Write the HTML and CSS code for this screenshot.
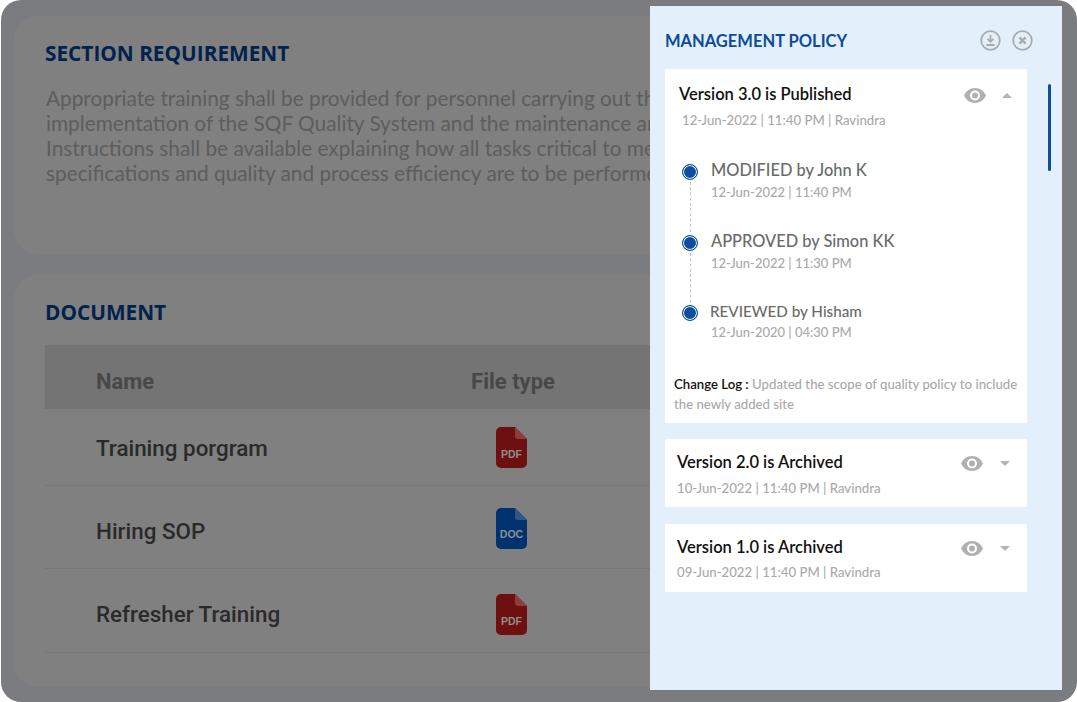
FILE: index.html
```html
<!DOCTYPE html>
<html lang="en">
<head>
<meta charset="utf-8">
<title>Management Policy</title>
<link rel="stylesheet" href="styles.css">
</head>
<body>
<div class="frame">
  <main class="content">
    <section class="card card-req">
      <h2 class="card-title">SECTION REQUIREMENT</h2>
      <p class="req-line">Appropriate training shall be provided for personnel carrying out the</p>
      <p class="req-line">implementation of the SQF Quality System and the maintenance and</p>
      <p class="req-line">Instructions shall be available explaining how all tasks critical to meet</p>
      <p class="req-line">specifications and quality and process efficiency are to be performed</p>
    </section>
    <section class="card card-doc">
      <h2 class="card-title">DOCUMENT</h2>
      <div class="table">
        <div class="row row-head"><div class="col-name">Name</div><div class="col-type">File type</div></div>
        <div class="row row-body row-1"><div class="col-name">Training porgram</div><div class="col-type">
          <svg class="file" viewBox="0 0 31 41"><path fill="#6e1010" d="M5 0H19L31 12V36a5 5 0 0 1-5 5H5a5 5 0 0 1-5-5V5a5 5 0 0 1 5-5Z"/><path fill="#8f3c3f" d="M19 0L31 12H22a3 3 0 0 1-3-3Z"/><text class="file-label" x="15.5" y="31">PDF</text></svg></div></div>
        <div class="row row-body row-2"><div class="col-name">Hiring SOP</div><div class="col-type">
          <svg class="file" viewBox="0 0 31 41"><path fill="#00326f" d="M5 0H19L31 12V36a5 5 0 0 1-5 5H5a5 5 0 0 1-5-5V5a5 5 0 0 1 5-5Z"/><path fill="#33558a" d="M19 0L31 12H22a3 3 0 0 1-3-3Z"/><text class="file-label" x="15.5" y="30">DOC</text></svg></div></div>
        <div class="row row-body row-3"><div class="col-name">Refresher Training</div><div class="col-type">
          <svg class="file" viewBox="0 0 31 41"><path fill="#6e1010" d="M5 0H19L31 12V36a5 5 0 0 1-5 5H5a5 5 0 0 1-5-5V5a5 5 0 0 1 5-5Z"/><path fill="#8f3c3f" d="M19 0L31 12H22a3 3 0 0 1-3-3Z"/><text class="file-label" x="15.5" y="31">PDF</text></svg></div></div>
      </div>
    </section>
  </main>

  <aside class="panel">
    <header class="panel-head">
      <h1 class="panel-title">MANAGEMENT POLICY</h1>
      <div class="panel-actions">
        <svg class="round-icon" viewBox="0 0 21 21"><circle cx="10.5" cy="10.5" r="9.3"/><path d="M10.5 5v6.4M7.5 8.8l3 3 3-3M6.3 15h8.4"/></svg>
        <svg class="round-icon" viewBox="0 0 21 21"><circle cx="10.5" cy="10.5" r="9.3"/><path class="thick" d="M7.4 7.4l6.2 6.2M13.6 7.4l-6.2 6.2"/></svg>
      </div>
    </header>
    <div class="scrollbar"></div>

    <article class="version version-open">
      <div class="version-top">
        <h3 class="version-name">Version 3.0 is Published</h3>
        <svg class="eye" viewBox="0 0 22 15"><path fill-rule="evenodd" d="M11 0C6 0 2 3 0 7.5 2 12 6 15 11 15s9-3 11-7.5C20 3 16 0 11 0Zm0 12.5a5 5 0 1 1 0-10 5 5 0 0 1 0 10Zm0-8a3 3 0 1 0 0 6 3 3 0 0 0 0-6Z"/></svg>
        <span class="caret caret-up"></span>
      </div>
      <div class="version-meta meta-open">12-Jun-2022 | 11:40 PM | Ravindra</div>
      <ol class="timeline">
        <li class="step step-1"><span class="dot"></span><div class="step-name">MODIFIED by John K</div><div class="step-date">12-Jun-2022 | 11:40 PM</div></li>
        <li class="step step-2"><span class="dot"></span><div class="step-name">APPROVED by Simon KK</div><div class="step-date">12-Jun-2022 | 11:30 PM</div></li>
        <li class="step step-3"><span class="dot"></span><div class="step-name step-name-small">REVIEWED by Hisham</div><div class="step-date">12-Jun-2020 | 04:30 PM</div></li>
      </ol>
      <p class="changelog"><b>Change Log :</b> Updated the scope of quality policy to include the newly added site</p>
    </article>

    <article class="version version-closed">
      <div class="version-top">
        <h3 class="version-name">Version 2.0 is Archived</h3>
        <svg class="eye" viewBox="0 0 22 15"><path fill-rule="evenodd" d="M11 0C6 0 2 3 0 7.5 2 12 6 15 11 15s9-3 11-7.5C20 3 16 0 11 0Zm0 12.5a5 5 0 1 1 0-10 5 5 0 0 1 0 10Zm0-8a3 3 0 1 0 0 6 3 3 0 0 0 0-6Z"/></svg>
        <span class="caret caret-down"></span>
      </div>
      <div class="version-meta">10-Jun-2022 | 11:40 PM | Ravindra</div>
    </article>

    <article class="version version-closed">
      <div class="version-top">
        <h3 class="version-name">Version 1.0 is Archived</h3>
        <svg class="eye" viewBox="0 0 22 15"><path fill-rule="evenodd" d="M11 0C6 0 2 3 0 7.5 2 12 6 15 11 15s9-3 11-7.5C20 3 16 0 11 0Zm0 12.5a5 5 0 1 1 0-10 5 5 0 0 1 0 10Zm0-8a3 3 0 1 0 0 6 3 3 0 0 0 0-6Z"/></svg>
        <span class="caret caret-down"></span>
      </div>
      <div class="version-meta">09-Jun-2022 | 11:40 PM | Ravindra</div>
    </article>
  </aside>
</div>
</body>
</html>
```
FILE: styles.css
```css
* { box-sizing: border-box; }
html, body { margin: 0; padding: 0; background: #fff; }
body { width: 1077px; height: 702px; overflow: hidden; font-family: Lato, sans-serif; }
h1, h2, h3, p, ol { margin: 0; padding: 0; }

.frame {
  position: relative;
  width: 1076px;
  height: 702px;
  margin-left: 1px;
  border-radius: 20px;
  overflow: hidden;
  background: #7a7c7f;
}
.content {
  display: flex;
  flex-direction: column;
  gap: 21px;
  padding: 16px 0 0 13px;
}
.card {
  width: 1040px;
  background: #808080;
  border-radius: 24px;
  padding-left: 31px;
  overflow: hidden;
}
.card-req { height: 238px; padding-top: 23px; }
.card-doc { height: 412px; padding-top: 23px; }
.card-title {
  font: 700 20.8px/28px "Open Sans", sans-serif;
  color: #02224e;
  white-space: nowrap;
}
.card-req .card-title { margin-bottom: 18px; }
.req-line {
  font: 400 20.8px/25px Lato, sans-serif;
  color: #5d5d5d;
  white-space: nowrap;
  padding-left: 1px;
}

.table { margin-top: 19px; width: 980px; }
.row { display: flex; }
.row-head { height: 64px; align-items: center; padding-top: 10px; background: #747474; font: 700 22px/26px Roboto, sans-serif; color: #484848; }
.row-body { border-bottom: 1px solid #777; font: 500 22.4px/26px Roboto, sans-serif; color: #2a2a2a; }
.row-1 { height: 77px; }
.row-2 { height: 83px; }
.row-3 { height: 84px; }
.row-1 .col-name { padding-top: 26px; }
.row-2 .col-name, .row-3 .col-name { padding-top: 32px; }
.row-1 .file { margin-top: 18px; }
.row-2 .file { margin-top: 22px; }
.row-3 .file { margin-top: 25px; }
.col-name { width: 331px; padding-left: 51px; }
.col-type { width: 274px; text-align: center; }
.row-body .col-type { width: 270px; }
.file { width: 31px; height: 41px; display: block; margin: 0 auto; }
.file-label { font: 700 10.5px "Liberation Sans", sans-serif; fill: #8f8f8f; text-anchor: middle; }

.panel {
  position: absolute;
  left: 649px;
  top: 6px;
  width: 412px;
  height: 684px;
  background: #e3f0fc;
  padding: 0 35px 0 15px;
}
.panel-head {
  display: flex;
  justify-content: space-between;
  align-items: center;
  height: 63px;
  padding: 5px 0 0 0;
  margin-right: -6px;
}
.panel-title { font: 700 16.5px/20px Lato, sans-serif; color: #0b4c9b; white-space: nowrap; position: relative; top: 1px; }
.panel-actions { display: flex; gap: 11px; }
.round-icon { width: 21px; height: 21px; fill: none; stroke: #ababab; stroke-width: 1.8; display: block; }
.round-icon .thick { stroke-width: 2.4; }
.scrollbar {
  position: absolute;
  left: 398px;
  top: 78px;
  width: 3px;
  height: 87px;
  border-radius: 2px;
  background: #0d4f9e;
}

.version { background: #fff; border-radius: 2px; width: 362px; }
.version-open { height: 354px; padding: 13px 14px 0 14px; margin-bottom: 16px; }
.version-closed { height: 68px; padding: 11px 14px 0 12px; margin-bottom: 17px; }
.version-top { display: flex; align-items: center; height: 24px; }
.version-name { font: 600 16.5px/24px Lato, sans-serif; color: #111; flex: 1; white-space: nowrap; }
.eye { width: 22px; height: 15px; fill: #b0b0b0; display: block; margin-top: 2px; }
.caret { width: 0; height: 0; margin: 2px 0 0 16px; border-left: 5px solid transparent; border-right: 5px solid transparent; }
.version-closed .caret { margin-left: 17px; margin-right: 3px; }
.caret-up { margin-right: 1px; border-bottom: 5px solid #b4b4b4; }
.caret-down { border-top: 5px solid #b4b4b4; }
.version-meta { font: 500 13.2px/16px Lato, sans-serif; color: #a9a9a9; margin-top: 6px; white-space: nowrap; }
.version-closed:last-child .version-meta { margin-top: 5px; }
.meta-open { padding-left: 3px; }

.timeline { list-style: none; margin-top: 32px; height: 170px; }
.step { position: relative; padding-left: 32px; }
.step-1 { height: 71px; }
.step-2 { height: 71px; }
.step-name { font: 500 16.4px/20px Lato, sans-serif; color: #6a6a6a; white-space: nowrap; }
.step-name-small { font-size: 15.2px; margin-left: -1px; margin-top: -1px; }
.step-date { font: 500 13px/16px Lato, sans-serif; color: #a9a9a9; margin-top: 4px; white-space: nowrap; }
.step-3 .step-date { margin-top: 3px; }
.dot {
  position: absolute;
  left: 3px;
  top: 4px;
  width: 16px;
  height: 16px;
  border-radius: 50%;
  background: #0d4f9e;
  border: 1px solid #0d4f9e;
  box-shadow: inset 0 0 0 1px #fff;
}
.step-1::after, .step-2::after {
  content: "";
  position: absolute;
  left: 11px;
  top: 22px;
  height: 50px;
  border-left: 1px dashed #c4c4c4;
}
.changelog { font: 500 13.2px/20px Lato, sans-serif; color: #a9a9a9; margin: 44px 0 0 -5px; width: 350px; }
.changelog b { font-weight: 600; color: #111; }
```
